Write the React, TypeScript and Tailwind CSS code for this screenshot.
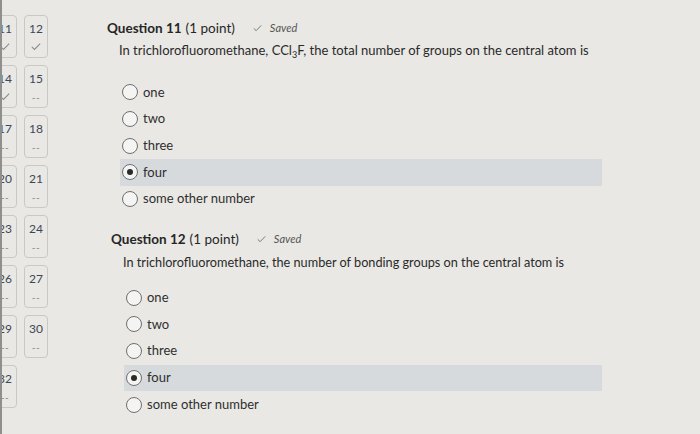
import React from "react";

type Tile = { n: number; done: boolean };

const tiles: (Tile | null)[][] = [
  [{ n: 11, done: true }, { n: 12, done: true }],
  [{ n: 14, done: true }, { n: 15, done: false }],
  [{ n: 17, done: false }, { n: 18, done: false }],
  [{ n: 20, done: false }, { n: 21, done: false }],
  [{ n: 23, done: false }, { n: 24, done: false }],
  [{ n: 26, done: false }, { n: 27, done: false }],
  [{ n: 29, done: false }, { n: 30, done: false }],
  [{ n: 32, done: false }, null],
];

const options = ["one", "two", "three", "four", "some other number"];

function Check({ className }: { className?: string }) {
  return (
    <svg viewBox="0 0 12 10" className={className} fill="none" stroke="currentColor" strokeWidth="1.3">
      <path d="M1 5.5 L4.2 8.5 L11 1.5" />
    </svg>
  );
}

function NavTile({ tile }: { tile: Tile }) {
  return (
    <div className="h-[43px] w-[24px] rounded-[4px] border border-[#c9c8c4] flex flex-col items-center pt-[6px]">
      <span className="text-[12px] leading-[14px] text-[#3d4756]">{tile.n}</span>
      {tile.done ? (
        <Check className="w-[10px] h-[9px] mt-[6px] text-[#8a8c8f]" />
      ) : (
        <span className="text-[10px] leading-[10px] mt-[6px] text-[#7f838a] tracking-[0.5px]">--</span>
      )}
    </div>
  );
}

function Radio({ checked }: { checked: boolean }) {
  return (
    <span className="w-[16px] h-[16px] rounded-full border border-[#6f6f6f] bg-[#f4f4f2] flex items-center justify-center shrink-0">
      {checked && <span className="w-[6px] h-[6px] rounded-full bg-[#2a2a2a]" />}
    </span>
  );
}

function Question({
  num,
  text,
  textClass,
  optionsClass,
}: {
  num: number;
  text: React.ReactNode;
  textClass: string;
  optionsClass: string;
}) {
  return (
    <div>
      <div className="flex items-center h-[18px] text-[13.5px] text-[#262626]">
        <span className="font-bold">Question {num}</span>
        <span className="ml-[4px]">(1 point)</span>
        <span className="ml-[18px] flex items-center text-[#555] italic text-[11px]">
          <Check className="w-[9px] h-[8px] text-[#777] mr-[8px]" />
          Saved
        </span>
      </div>
      <div className={`h-[18px] flex items-center text-[#2a2a2a] mt-[5px] pl-[12px] ${textClass}`}>{text}</div>
      <div className={optionsClass}>
        {options.map((o) => (
          <div
            key={o}
            className={`h-[26.7px] flex items-center gap-[5px] px-[2px] text-[13px] text-[#2f2f2f] ${
              o === "four" ? "bg-[#d6dadd]" : ""
            }`}
          >
            <Radio checked={o === "four"} />
            <span>{o}</span>
          </div>
        ))}
      </div>
    </div>
  );
}

export default function App() {
  return (
    <div className="w-[700px] h-[434px] bg-[#e9e8e4] flex overflow-hidden font-['Lato','Liberation_Sans',sans-serif]">
      <div className="w-[56px] shrink-0 border-l-[2px] border-[#8f8f8d] overflow-hidden">
        <div className="ml-[-9px] pt-[15px] flex flex-col gap-[7px]">
          {tiles.map((row, i) => (
            <div key={i} className="flex gap-[7px]">
              {row.map((t, j) => (t ? <NavTile key={j} tile={t} /> : <div key={j} className="w-[24px]" />))}
            </div>
          ))}
        </div>
      </div>
      <div className="flex-1 pt-[19px] pl-[51px]">
        <Question
          num={11}
          textClass="text-[13px]"
          text={
            <span>
              In trichlorofluoromethane, CCl<sub className="text-[9px]">3</sub>F, the total number of groups on the central atom is
            </span>
          }
          optionsClass="mt-[19px] ml-[13px] w-[482px]"
        />
        <div className="mt-[18px] ml-[4px]">
          <Question
            num={12}
            textClass="text-[12.7px]"
            text="In trichlorofluoromethane, the number of bonding groups on the central atom is"
            optionsClass="mt-[13px] ml-[13px] w-[478px]"
          />
        </div>
      </div>
    </div>
  );
}
